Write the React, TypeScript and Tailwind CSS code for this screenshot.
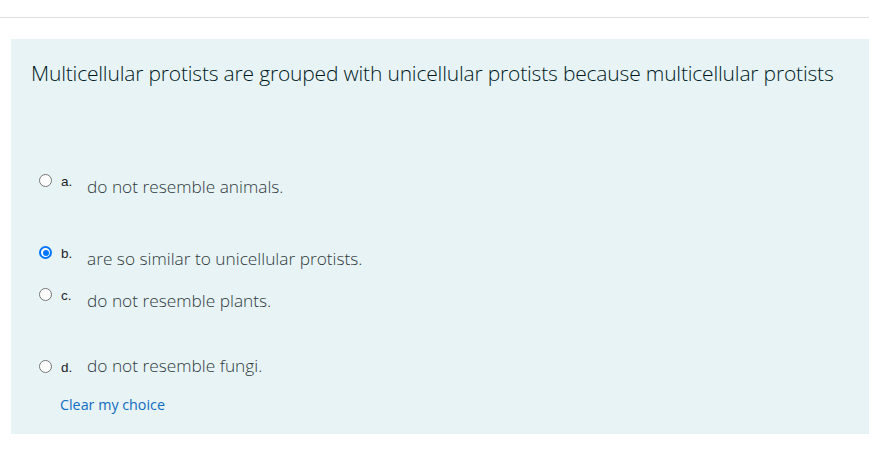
import React from "react";

function Radio({ checked }: { checked?: boolean }) {
  return checked ? (
    <span className="flex w-[13px] h-[13px] rounded-full border-2 border-[#0075ff] bg-white items-center justify-center shrink-0">
      <span className="block w-[6px] h-[6px] rounded-full bg-[#0075ff]" />
    </span>
  ) : (
    <span className="block w-[13px] h-[13px] rounded-full border border-[#767676] bg-white shrink-0" />
  );
}

type Opt = { l: string; t: string; checked?: boolean; h: string; ansPt: string };

const opts: Opt[] = [
  { l: "a.", t: "do not resemble animals.", h: "h-[72px]", ansPt: "mt-[4px]" },
  { l: "b.", t: "are so similar to unicellular protists.", checked: true, h: "h-[42px]", ansPt: "mt-[4px]" },
  { l: "c.", t: "do not resemble plants.", h: "h-[72px]", ansPt: "mt-[4px]" },
  { l: "d.", t: "do not resemble fungi.", h: "h-[30px]", ansPt: "-mt-[3px]" },
];

export default function App() {
  return (
    <div className="w-[869px] h-[473px] bg-white overflow-hidden" style={{ fontFamily: "'Open Sans', 'Liberation Sans', sans-serif" }}>
      <div className="h-[17px]" />
      <div className="h-px bg-[#dee2e6]" />
      <div className="h-[21px]" />
      <div className="ml-[11px] bg-[#e7f3f5] h-[395px] pl-[20px] pt-[18px]">
        <div className="text-[21px] leading-[32px] font-light text-[#001a1e] tracking-[-0.18px]">
          Multicellular protists are grouped with unicellular protists because multicellular protists
        </div>
        <div className="mt-[82px] pl-[8px]">
          {opts.map((o) => (
            <div key={o.l} className={`flex items-start ${o.h}`}>
              <div className="pt-[3px]"><Radio checked={o.checked} /></div>
              <div className="ml-[9px] w-[26px] text-[13.5px] leading-[16px] text-[#1d2125] pt-[3px]" style={{ fontFamily: "'Liberation Sans', Arial, sans-serif" }}>{o.l}</div>
              <div className={`text-[17.3px] leading-[24px] font-light text-[#2f3a3d] ${o.ansPt}`}>{o.t}</div>
            </div>
          ))}
          <div className="ml-[21px] mt-[8px] text-[14.3px] leading-[20px] text-[#0f6cbf]">Clear my choice</div>
        </div>
      </div>
    </div>
  );
}
